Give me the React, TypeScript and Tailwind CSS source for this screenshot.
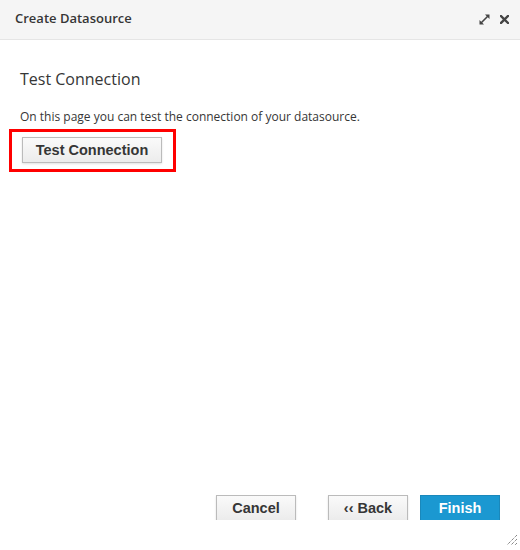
import React from "react";

function ExpandIcon() {
  return (
    <svg width="11" height="11" viewBox="0 0 11 11" className="text-[#444]">
      <path d="M6 0.5 H10.5 V5 L8.8 3.3 L3.3 8.8 L5 10.5 H0.5 V6 L2.2 7.7 L7.7 2.2 Z" fill="currentColor" />
    </svg>
  );
}

function CloseIcon() {
  return (
    <svg width="9" height="9" viewBox="0 0 9 9" className="text-[#444]">
      <path d="M1 1 L8 8 M8 1 L1 8" stroke="currentColor" strokeWidth="2.4" strokeLinecap="square" />
    </svg>
  );
}

export default function App() {
  const btn =
    "h-[26px] w-[80px] pt-[2px] border border-[#bbb] bg-gradient-to-b from-[#fafafa] to-[#ececec] text-[14.5px] font-bold text-[#363636] shadow-[0_1px_2px_rgba(0,0,0,0.12)]";
  return (
    <div className="w-[520px] h-[550px] bg-white flex flex-col font-['Open_Sans',sans-serif]">
      {/* header */}
      <div className="h-[40px] shrink-0 bg-[#f5f5f5] border-b border-[#e5e5e5] flex items-center pl-[15px] pr-[11px]">
        <div className="text-[13px] font-semibold text-[#363636] mt-[-2px]">Create Datasource</div>
        <div className="ml-auto flex items-center gap-[10px] mt-[-1px]">
          <ExpandIcon />
          <CloseIcon />
        </div>
      </div>

      {/* body */}
      <div className="flex-1 flex flex-col overflow-hidden">
        <div className="px-[20px] pt-[28px] flex-1">
          <h2 className="text-[16px] leading-[22px] text-[#363636]">Test Connection</h2>
          <p className="mt-[19px] text-[12px] leading-[16px] text-[#363636]">
            On this page you can test the connection of your datasource.
          </p>
          <div className="ml-[-11px] mt-[4px] w-[167px] h-[43px] border-[3px] border-[#ff0000] pt-[5px] pl-[10px]">
            <button className={btn + " w-[140px] font-['Liberation_Sans',Arial,sans-serif]"}>Test Connection</button>
          </div>
        </div>
        <div className="h-[25px] shrink-0 overflow-hidden flex items-start pr-[20px] font-['Liberation_Sans',Arial,sans-serif]">
          <button className={btn + " ml-[216px]"}>Cancel</button>
          <button className={btn + " ml-[32px]"}>&lsaquo;&lsaquo; Back</button>
          <button className="ml-[12px] h-[26px] w-[80px] pt-[2px] border border-[#1a88bb] bg-[#1b98d1] text-[14.5px] font-bold text-white">
            Finish
          </button>
        </div>
      </div>

      {/* footer */}
      <div className="h-[30px] shrink-0 flex items-end justify-end pr-[2px] pb-[4px]">
        <svg width="12" height="12" viewBox="0 0 12 12">
          <path d="M11 1 L1 11 M11 5 L5 11 M11 9 L9 11" stroke="#555" strokeWidth="1" strokeDasharray="1 1" />
        </svg>
      </div>
    </div>
  );
}
